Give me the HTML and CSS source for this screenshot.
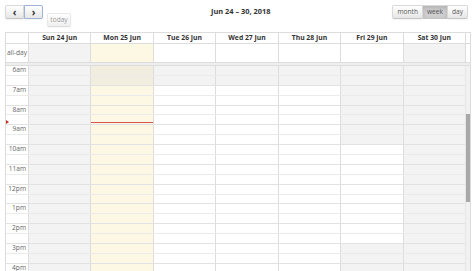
FILE: index.html
```html
<!DOCTYPE html>
<html lang="en">
<head>
    <meta charset="UTF-8">
    <meta name="viewport" content="width=device-width, initial-scale=1.0">
    <title>Calendar - week</title>
    <link rel="stylesheet" href="styles.css">
</head>
<body>
    <div class="calendar">
        <div class="toolbar">
            <div class="left">
                <div class="btn-group">
                    <button class="btn btn-first">&lsaquo;</button>
                    <button class="btn btn-last btn-focus">&rsaquo;</button>
                </div>
                <button class="btn btn-today" disabled>today</button>
            </div>
            <h2 class="title">Jun 24 – 30, 2018</h2>
            <div class="btn-group right">
                <button class="btn btn-first">month</button>
                <button class="btn btn-mid active">week</button>
                <button class="btn btn-last">day</button>
            </div>
        </div>

        <div class="view">
            <div class="row head">
                <div class="axis"></div>
                <div class="day">Sun 24 Jun</div>
                <div class="day">Mon 25 Jun</div>
                <div class="day">Tue 26 Jun</div>
                <div class="day">Wed 27 Jun</div>
                <div class="day">Thu 28 Jun</div>
                <div class="day">Fri 29 Jun</div>
                <div class="day">Sat 30 Jun</div>
                <div class="gutter"></div>
            </div>
            <div class="row allday">
                <div class="axis">all-day</div>
                <div class="day weekend"></div>
                <div class="day today"></div>
                <div class="day"></div>
                <div class="day"></div>
                <div class="day"></div>
                <div class="day"></div>
                <div class="day weekend"></div>
                <div class="gutter"></div>
            </div>
            <div class="divider"></div>

            <div class="body">
                <div class="time-grid">
                    <div class="bg">
                        <div class="axis"></div>
                        <div class="col weekend"></div>
                        <div class="col today"><div class="nb h1"></div></div>
                        <div class="col"><div class="nb h1"></div></div>
                        <div class="col"><div class="nb h1"></div></div>
                        <div class="col"><div class="nb h1"></div></div>
                        <div class="col"><div class="nb h4"></div><div class="open h5"></div><div class="nb rest"></div></div>
                        <div class="col weekend"></div>
                    </div>

                    <div class="slats">
                        <div class="slat"><span>6am</span></div>
                        <div class="slat minor"></div>
                        <div class="slat"><span>7am</span></div>
                        <div class="slat minor"></div>
                        <div class="slat"><span>8am</span></div>
                        <div class="slat minor"></div>
                        <div class="slat"><span>9am</span></div>
                        <div class="slat minor"></div>
                        <div class="slat"><span>10am</span></div>
                        <div class="slat minor"></div>
                        <div class="slat"><span>11am</span></div>
                        <div class="slat minor"></div>
                        <div class="slat"><span>12pm</span></div>
                        <div class="slat minor"></div>
                        <div class="slat"><span>1pm</span></div>
                        <div class="slat minor"></div>
                        <div class="slat"><span>2pm</span></div>
                        <div class="slat minor"></div>
                        <div class="slat"><span>3pm</span></div>
                        <div class="slat minor"></div>
                        <div class="slat"><span>4pm</span></div>
                        <div class="slat minor"></div>
                        <div class="slat"><span>5pm</span></div>
                        <div class="slat minor"></div>
                    </div>

                    <div class="now-arrow"></div>
                    <div class="now-line"></div>
                </div>
                <div class="scrollbar"><div class="thumb"></div></div>
            </div>
        </div>
    </div>
</body>
</html>
```

FILE: styles.css
```css
html, body {
    margin: 0;
    height: 271px;
    overflow: hidden;
}
body {
    font-family: 'Open Sans', 'Liberation Sans', sans-serif;
    font-size: 7px;
    color: #333;
    background: #fff;
}
.calendar {
    padding: 5px 0 0 5px;
}

/* toolbar */
.toolbar {
    display: flex;
    justify-content: space-between;
    align-items: flex-start;
    width: 463px;
    height: 27px;
}
.left {
    display: flex;
    align-items: flex-start;
    gap: 4px;
}
.title {
    margin: 1px 0 0 18px;
    font-size: 7.4px;
    font-weight: bold;
    line-height: 10px;
}
.btn-group {
    display: flex;
}
.btn {
    height: 14px;
    padding: 0 5px;
    font-family: inherit;
    font-size: 6.6px;
    color: #555;
    background: linear-gradient(#fff, #e6e6e6);
    border: 1px solid #d9d9d9;
    border-bottom-color: #c4c4c4;
    box-shadow: inset 0 1px 0 rgba(255,255,255,0.2), 0 1px 2px rgba(0,0,0,0.05);
    margin: 0;
    line-height: 12px;
}
.btn-first {
    border-radius: 2px 0 0 2px;
}
.btn-mid {
    border-radius: 0;
    border-left: none;
}
.btn-last {
    border-radius: 0 2px 2px 0;
    border-left: none;
}
.btn-group .btn-first,
.btn-group .btn-last {
    min-width: 19px;
}
.btn-group:first-child .btn {
    font-size: 10px;
    font-weight: bold;
    color: #333;
    line-height: 11px;
}
.btn-focus {
    border: 1px solid #9fb3d8;
}
.btn-today {
    margin-top: 8px;
    border-radius: 2px;
    opacity: 0.6;
    width: 24px;
    padding: 0;
}
.right .btn {
    padding: 0 4px;
}
.right .btn-last {
    min-width: 20px;
}
.active {
    background: #cfcfcf;
    box-shadow: inset 0 2px 4px rgba(0,0,0,0.15);
}

/* view */
.view {
    width: 464px;
    border: 1px solid #ddd;
    border-bottom: none;
}
.row {
    display: grid;
    grid-template-columns: 22px repeat(7, 1fr) 5px;
}
.day,
.gutter {
    border-left: 1px solid #ddd;
}
.head {
    height: 10px;
    border-bottom: 1px solid #ddd;
}
.head .day {
    font-size: 6.8px;
    font-weight: bold;
    text-align: center;
    line-height: 10px;
}
.allday {
    height: 18px;
}
.allday .axis {
    font-size: 6.6px;
    color: #666;
    line-height: 18px;
    text-align: right;
    padding-right: 1px;
}
.weekend {
    background: #f3f3f3;
}
.today {
    background: #fcf8e3;
}
.divider {
    height: 2px;
    background: #eee;
    border-top: 1px solid #ddd;
    border-bottom: 1px solid #ddd;
}

/* time grid */
.body {
    display: flex;
    height: 210px;
    overflow: hidden;
}
.time-grid {
    position: relative;
    flex: 1;
    height: 238px;
}
.bg {
    display: grid;
    grid-template-columns: 22px repeat(7, 1fr);
    height: 100%;
}
.col {
    display: flex;
    flex-direction: column;
    border-left: 1px solid #ddd;
}
.nb {
    background: rgba(215, 215, 215, 0.3);
}
.h1 { height: 19.8px; }
.h4 { height: 79.2px; }
.h5 { height: 99px; }
.rest { flex: 1; }

.slats {
    position: absolute;
    top: 0;
    left: 0;
    right: 0;
}
.slat {
    box-sizing: border-box;
    height: 9.9px;
    border-bottom: 1px solid #ebebeb;
}
.slat.minor {
    border-bottom-color: #e2e2e2;
}
.slat span {
    display: block;
    width: 20px;
    text-align: right;
    font-size: 6.6px;
    line-height: 7px;
    color: #666;
}
.now-line {
    position: absolute;
    top: 56px;
    left: 85px;
    width: 62px;
    border-top: 1px solid #d9534f;
}
.now-arrow {
    position: absolute;
    top: 54px;
    left: 0;
    border-style: solid;
    border-color: transparent;
    border-left-color: #c9302c;
    border-width: 2.5px 0 2.5px 3px;
}
.scrollbar {
    position: relative;
    width: 5px;
    background: #f1f1f1;
    border-left: 1px solid #e6e6e6;
    box-sizing: border-box;
}
.thumb {
    position: absolute;
    top: 48px;
    left: 0;
    right: 0;
    height: 88px;
    background: #a8a8a8;
}
```
